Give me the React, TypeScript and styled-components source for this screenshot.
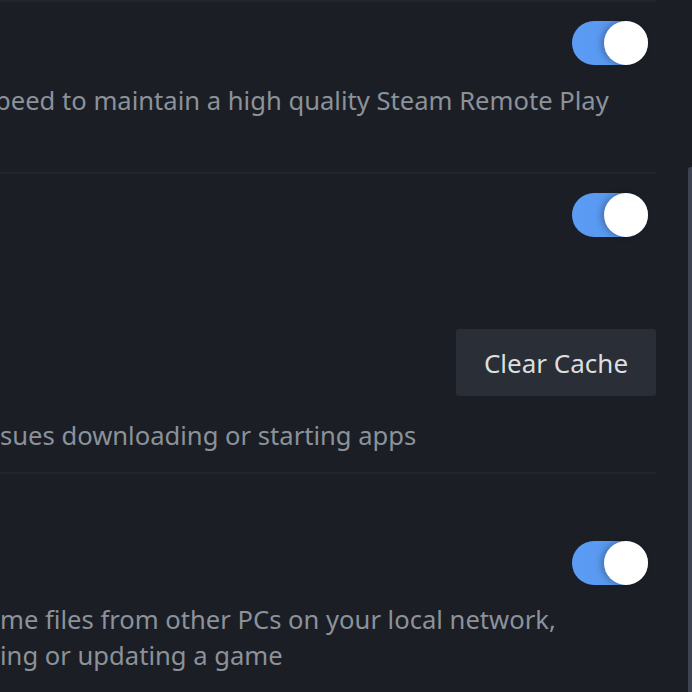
import React from 'react';
import { styled, createGlobalStyle } from 'styled-components';

const GlobalStyle = createGlobalStyle`
  html, body {
    margin: 0;
    padding: 0;
    background: #1b1e25;
    overflow: hidden;
  }
  body {
    font-family: "Noto Sans", "Liberation Sans", sans-serif;
  }
`;

const Page = styled.div`
  display: flex;
  width: 692px;
  height: 692px;
  overflow: hidden;
  background: #1b1e25;
`;

const Column = styled.div`
  display: flex;
  flex-direction: column;
  width: 656px;
  flex-shrink: 0;
`;

const Gutter = styled.div`
  display: flex;
  justify-content: flex-end;
  flex: 1;
  padding-top: 167px;
`;

const ScrollThumb = styled.div`
  width: 4px;
  height: 600px;
  background: #3d4350;
  border-top-left-radius: 3px;
`;

const Section = styled.section<{ $top: number; $bottom: number; $divider?: boolean }>`
  display: flex;
  flex-direction: column;
  border-top: ${(p) => (p.$divider === false ? 'none' : '2px solid #23262e')};
  padding: ${(p) => p.$top}px 0 ${(p) => p.$bottom}px;
`;

const ControlRow = styled.div<{ $height: number; $inset?: number }>`
  display: flex;
  align-items: center;
  justify-content: flex-end;
  height: ${(p) => p.$height}px;
  padding-right: ${(p) => p.$inset ?? 0}px;
`;

const Description = styled.div<{ $top: number; $shift?: number }>`
  margin-top: ${(p) => p.$top}px;
  margin-left: ${(p) => p.$shift ?? 0}px;
  color: #8b929a;
  font-size: 25.6px;
  line-height: 36px;
  white-space: nowrap;
`;

const Track = styled.div<{ $on: boolean }>`
  position: relative;
  width: 76px;
  height: 44px;
  border-radius: 22px;
  background: ${(p) =>
    p.$on ? 'linear-gradient(90deg, #5b9cf6 0%, #5a98ef 55%, #4f86d6 70%)' : '#3d4350'};
`;

const Knob = styled.div<{ $on: boolean }>`
  position: absolute;
  top: 0;
  left: ${(p) => (p.$on ? 32 : 0)}px;
  width: 44px;
  height: 44px;
  border-radius: 50%;
  background: #ffffff;
  box-shadow: -3px 0 6px rgba(0, 0, 0, 0.25);
`;

const Button = styled.button`
  width: 200px;
  height: 67px;
  border: none;
  border-radius: 3px;
  background: #2a2e37;
  color: #dcdedf;
  font-family: "Noto Sans", "Liberation Sans", sans-serif;
  font-size: 26px;
  padding: 0;
  cursor: pointer;
`;

const Toggle = ({ on = true }: { on?: boolean }) => (
  <Track $on={on}>
    <Knob $on={on} />
  </Track>
);

export default function App() {
  return (
    <Page>
      <GlobalStyle />
      <Column>
        <Section $top={19} $bottom={53}>
          <ControlRow $height={44} $inset={8}>
            <Toggle />
          </ControlRow>
          <Description $top={18} $shift={-5}>
            peed to maintain a high quality Steam Remote Play
          </Description>
        </Section>
        <Section $top={19} $bottom={0}>
          <ControlRow $height={44} $inset={8}>
            <Toggle />
          </ControlRow>
        </Section>
        <Section $divider={false} $top={92} $bottom={18}>
          <ControlRow $height={67}>
            <Button>Clear Cache</Button>
          </ControlRow>
          <Description $top={22}>sues downloading or starting apps</Description>
        </Section>
        <Section $top={67} $bottom={0}>
          <ControlRow $height={44} $inset={8}>
            <Toggle />
          </ControlRow>
          <Description $top={17}>me files from other PCs on your local network,</Description>
          <Description $top={0}>ing or updating a game</Description>
        </Section>
      </Column>
      <Gutter>
        <ScrollThumb />
      </Gutter>
    </Page>
  );
}
